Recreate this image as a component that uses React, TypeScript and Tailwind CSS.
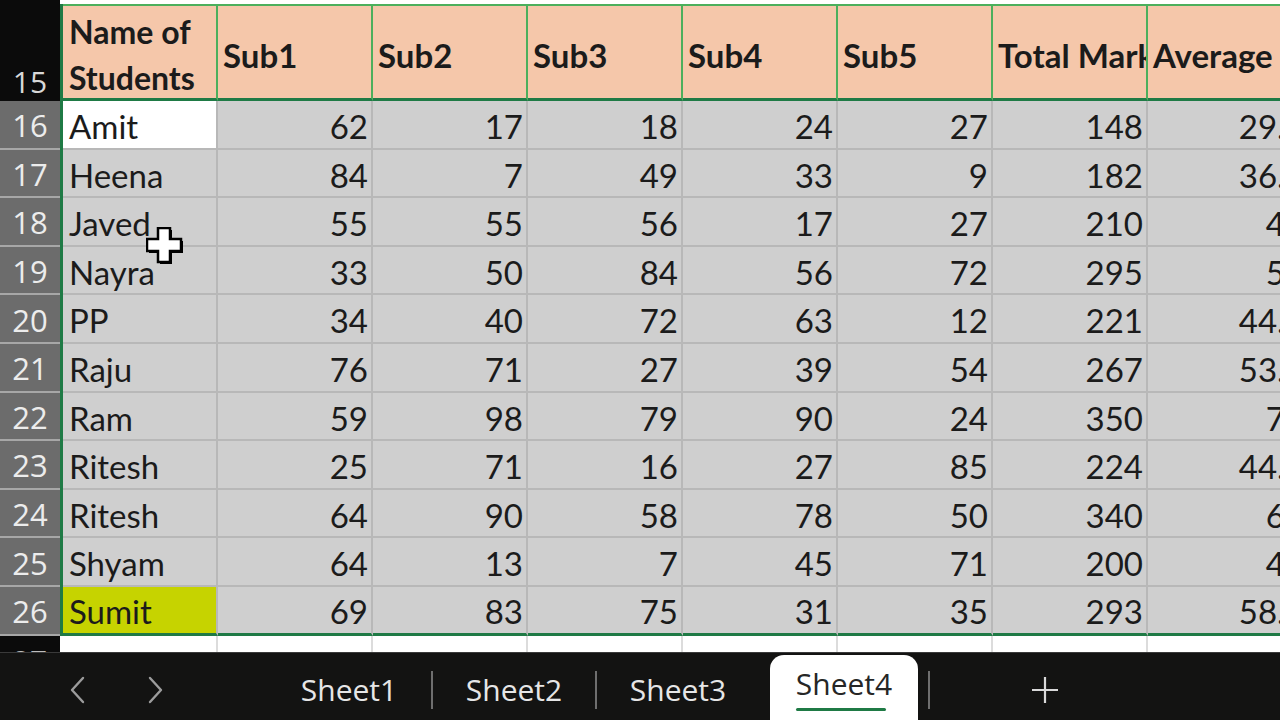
import React from "react";

type Row = { n: number; name: string; marks: number[]; total: number; avg: string; bg?: string };

const rows: Row[] = [
  { n: 16, name: "Amit", marks: [62, 17, 18, 24, 27], total: 148, avg: "29.6", bg: "bg-white" },
  { n: 17, name: "Heena", marks: [84, 7, 49, 33, 9], total: 182, avg: "36.4" },
  { n: 18, name: "Javed", marks: [55, 55, 56, 17, 27], total: 210, avg: "42" },
  { n: 19, name: "Nayra", marks: [33, 50, 84, 56, 72], total: 295, avg: "59" },
  { n: 20, name: "PP", marks: [34, 40, 72, 63, 12], total: 221, avg: "44.2" },
  { n: 21, name: "Raju", marks: [76, 71, 27, 39, 54], total: 267, avg: "53.4" },
  { n: 22, name: "Ram", marks: [59, 98, 79, 90, 24], total: 350, avg: "70" },
  { n: 23, name: "Ritesh", marks: [25, 71, 16, 27, 85], total: 224, avg: "44.8" },
  { n: 24, name: "Ritesh", marks: [64, 90, 58, 78, 50], total: 340, avg: "68" },
  { n: 25, name: "Shyam", marks: [64, 13, 7, 45, 71], total: 200, avg: "40" },
  { n: 26, name: "Sumit", marks: [69, 83, 75, 31, 35], total: 293, avg: "58.6", bg: "bg-[#c6d300]" },
];

const headers = ["Sub1", "Sub2", "Sub3", "Sub4", "Sub5", "Total Marks", "Average"];

const cellFont = "font-['Lato',sans-serif] text-[33px] text-[#1b1b1b]";
const uiFont = "font-['Open_Sans',sans-serif]";

// last column (Average) runs past the window edge
const colW = (i: number) => (i === 6 ? "w-[161px]" : "w-[155px]");

function HeaderRow() {
  return (
    <div className="flex h-[97px] shrink-0">
      <div className={`flex w-[60px] shrink-0 items-end justify-center bg-[#0b0b0b] pb-[4px] text-[30px] leading-none text-[#d8d8d8] ${uiFont}`}>
        15
      </div>
      <div className="flex border-l-[3px] border-[#1f7a45]">
        <div className={`flex h-full w-[155px] shrink-0 items-center border-t-2 border-r-2 border-b-[3px] border-t-[#4caf5c] border-r-[#4caf5c] border-b-[#1f7a45] bg-[#f5c7aa] pt-[6px] pl-[6px] font-bold leading-[46px] ${cellFont}`}>
          <span className="text-[32px]">
            Name of
            <br />
            Students
          </span>
        </div>
        {headers.map((h, i) => (
          <div
            key={h}
            className={`flex h-full ${colW(i)} shrink-0 items-center overflow-hidden whitespace-nowrap border-t-2 border-r-2 border-b-[3px] border-t-[#4caf5c] border-r-[#4caf5c] border-b-[#1f7a45] bg-[#f5c7aa] pt-[8px] pl-[5px] text-[32px] font-bold ${cellFont}`}
          >
            {h}
          </div>
        ))}
      </div>
    </div>
  );
}

function DataRow({ row, last }: { row: Row; last: boolean }) {
  const bottom = last ? "border-b-[3px] border-b-[#1f7a45]" : "border-b-2 border-b-[#b8b8b8]";
  const values = [...row.marks.map(String), String(row.total), row.avg];
  return (
    <div className="flex h-[48.6px] shrink-0">
      <div className={`flex w-[60px] shrink-0 items-center justify-center border-b-2 border-b-[#a7a7a7] bg-[#6c6c6c] pt-[3px] text-[31px] leading-none text-[#ececec] ${uiFont}`}>
        {row.n}
      </div>
      <div className="flex border-l-[3px] border-[#1f7a45]">
        <div className={`flex h-full w-[155px] shrink-0 items-center border-r-2 border-r-[#b8b8b8] pt-[5px] pl-[6px] ${bottom} ${row.bg ?? "bg-[#cfcfcf]"} ${cellFont}`}>
          {row.name}
        </div>
        {values.map((v, i) => (
          <div
            key={i}
            className={`flex h-full ${colW(i)} shrink-0 items-center justify-end border-r-2 border-r-[#b8b8b8] bg-[#cfcfcf] pt-[5px] pr-[3px] ${bottom} ${cellFont}`}
          >
            {v}
          </div>
        ))}
      </div>
    </div>
  );
}

function Chevron({ dir }: { dir: "left" | "right" }) {
  return (
    <svg width="28" height="30" viewBox="0 0 28 30" fill="none">
      <path
        d={dir === "left" ? "M19 3 L8 15 L19 27" : "M9 3 L20 15 L9 27"}
        stroke="#9c9c9c"
        strokeWidth="2.4"
        strokeLinecap="round"
        strokeLinejoin="round"
      />
    </svg>
  );
}

function Separator() {
  return <div className="h-[38px] w-[2px] shrink-0 bg-[#6e6e6e]" />;
}

function TabBar() {
  return (
    <div className={`flex h-[68px] shrink-0 items-end border-t border-[#3a3a3a] bg-[#131312] ${uiFont}`}>
      <div className="flex h-full items-center pt-[6px] pl-[64px]">
        <Chevron dir="left" />
        <div className="ml-[49px]">
          <Chevron dir="right" />
        </div>
      </div>
      <div className="ml-[98px] flex h-full items-center pt-[6px]">
        <div className="flex w-[164px] justify-center text-[30px] font-medium text-[#e6e6e6]">Sheet1</div>
        <Separator />
        <div className="flex w-[162px] justify-center text-[30px] font-medium text-[#e6e6e6]">Sheet2</div>
        <Separator />
        <div className="flex w-[162px] justify-center text-[30px] font-medium text-[#e6e6e6]">Sheet3</div>
      </div>
      <div className="ml-[11px] flex h-[65px] w-[148px] shrink-0 justify-center rounded-t-[14px] bg-white pt-[7px]">
        <div className="flex flex-col items-start">
          <span className="text-[30px] font-medium leading-[44px] text-[#262626]">Sheet4</span>
          <div className="mt-[2px] h-[3px] w-[90px] rounded-full bg-[#1f7a45]" />
        </div>
      </div>
      <div className="ml-[10px] flex h-full items-center pt-[6px]">
        <Separator />
      </div>
      <div className="ml-[100px] flex h-full items-center pt-[6px]">
        <svg width="30" height="30" viewBox="0 0 30 30">
          <path d="M15 2 V28 M2 15 H28" stroke="#d9d9d9" strokeWidth="2.2" />
        </svg>
      </div>
    </div>
  );
}

function Cursor() {
  const pts = "12,1 24,1 24,12 35,12 35,24 24,24 24,35 12,35 12,24 1,24 1,12 12,12";
  return (
    <svg className="pointer-events-none absolute left-[146px] top-[227px]" width="40" height="40" viewBox="0 0 40 40">
      <polygon points={pts} transform="translate(2 2)" fill="#000" />
      <polygon points={pts} fill="#fff" stroke="#000" strokeWidth="2.5" strokeLinejoin="miter" />
    </svg>
  );
}

export default function App() {
  return (
    <div className="relative flex h-[720px] w-[1280px] flex-col overflow-hidden bg-white">
      <div className="flex h-[4px] shrink-0">
        <div className="w-[60px] bg-[#0b0b0b]" />
        <div className="flex-1 bg-white" />
      </div>
      <HeaderRow />
      {rows.map((r, i) => (
        <DataRow key={r.n} row={r} last={i === rows.length - 1} />
      ))}
      <div className="flex min-h-0 flex-1">
        <div className={`flex w-[60px] shrink-0 justify-center overflow-hidden bg-[#0b0b0b] pt-[10px] text-[30px] leading-none text-[#bdbdbd] ${uiFont}`}>
          27
        </div>
        <div className="flex border-l-[3px] border-white">
          {Array.from({ length: 8 }).map((_, i) => (
            <div key={i} className="h-full w-[155px] shrink-0 border-r-2 border-r-[#dcdcdc] bg-white" />
          ))}
        </div>
      </div>
      <TabBar />
      <Cursor />
    </div>
  );
}
